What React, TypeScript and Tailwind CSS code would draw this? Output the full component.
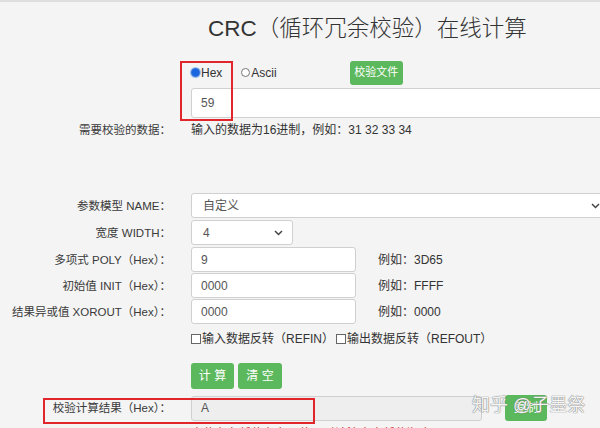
import React from "react";

const font = { fontFamily: '"Liberation Sans", "Noto Sans CJK SC", sans-serif' };

function Label({ children }: { children: React.ReactNode }) {
  return (
    <div className="flex w-[171px] shrink-0 justify-end whitespace-nowrap text-[11.5px] leading-[16px] text-[#3a3a3a]">
      <span>{children}</span>
    </div>
  );
}

function Chevron() {
  return (
    <svg width="9" height="6" viewBox="0 0 9 6" className="shrink-0">
      <path d="M1 1 L4.5 4.5 L8 1" fill="none" stroke="#444" strokeWidth="1.5" />
    </svg>
  );
}

function Row({ label, children, mt }: { label: string; children: React.ReactNode; mt: string }) {
  return (
    <div className={`flex items-center ${mt}`}>
      <Label>{label}</Label>
      <div className="ml-[20px] flex items-center">{children}</div>
    </div>
  );
}

function TextBox({ value, w }: { value: string; w: string }) {
  return (
    <div
      className={`${w} h-[25px] flex items-center rounded-[3px] border border-[#d0d0d0] bg-white pl-[9px] text-[12px] text-[#555]`}
    >
      {value}
    </div>
  );
}

function Check({ text }: { text: string }) {
  return (
    <div className="flex items-center whitespace-nowrap text-[12px] text-[#333]">
      <span className="mr-[1px] inline-block h-[10px] w-[10px] border border-[#666] bg-white" />
      {text}
    </div>
  );
}

export default function App() {
  return (
    <div
      className="relative h-[428px] w-[600px] overflow-hidden border-t-2 border-[#dedede] bg-[#f4f4f4]"
      style={font}
    >
      <h1 className="mt-[12px] pl-[208px] text-[22.5px] leading-[30px] font-light text-[#333] whitespace-nowrap">
        CRC（循环冗余校验）在线计算
      </h1>

      {/* data section */}
      <div className="mt-[16px] flex">
        <div className="flex flex-col justify-end">
          <Label>需要校验的数据：</Label>
        </div>
        <div className="ml-[20px] flex flex-col">
          <div className="flex h-[25px] items-center text-[12px] text-[#333]">
            <span className="inline-block h-[9px] w-[9px] rounded-full border border-[#2f6fd6] bg-[#1a66e0] shadow-[0_0_0_1px_#9fc0f0]" />
            <span className="ml-[1px]">Hex</span>
            <span className="ml-[19px] inline-block h-[9px] w-[9px] rounded-full border border-[#777] bg-white" />
            <span className="ml-[1px]">Ascii</span>
            <button className="ml-[73px] h-[24px] w-[53px] rounded-[3px] bg-[#5cb85c] text-[11px] text-white">
              校验文件
            </button>
          </div>
          <div className="mt-[3px] flex h-[30px] w-[420px] items-center rounded-[3px] border border-[#d0d0d0] bg-white pl-[9px] text-[12px] text-[#555]">
            59
          </div>
          <div className="mt-[4px] text-[12px] leading-[16px] text-[#333]">
            输入的数据为16进制，例如：31 32 33 34
          </div>
        </div>
      </div>

      {/* parameters */}
      <Row label="参数模型 NAME：" mt="mt-[55px]">
        <div className="flex h-[25px] w-[420px] items-center justify-between rounded-[3px] border border-[#d0d0d0] bg-white pl-[11px] pr-[10px] text-[12px] text-[#555]">
          <span>自定义</span>
          <Chevron />
        </div>
      </Row>
      <Row label="宽度 WIDTH：" mt="mt-[2px]">
        <div className="flex h-[25px] w-[102px] items-center justify-between rounded-[3px] border border-[#d0d0d0] bg-white pl-[11px] pr-[9px] text-[12px] text-[#555]">
          <span>4</span>
          <Chevron />
        </div>
      </Row>
      <Row label="多项式 POLY（Hex）：" mt="mt-[2px]">
        <TextBox value="9" w="w-[165px]" />
        <span className="ml-[22px] text-[12px] text-[#333]">例如：3D65</span>
      </Row>
      <Row label="初始值 INIT（Hex）：" mt="mt-[1px]">
        <TextBox value="0000" w="w-[165px]" />
        <span className="ml-[22px] text-[12px] text-[#333]">例如：FFFF</span>
      </Row>
      <Row label="结果异或值 XOROUT（Hex）：" mt="mt-[1px]">
        <TextBox value="0000" w="w-[165px]" />
        <span className="ml-[22px] text-[12px] text-[#333]">例如：0000</span>
      </Row>

      <div className="mt-[7px] flex h-[16px] items-center pl-[191px]">
        <div className="w-[145px]">
          <Check text="输入数据反转（REFIN）" />
        </div>
        <Check text="输出数据反转（REFOUT）" />
      </div>

      <div className="mt-[16px] flex gap-[4px] pl-[191px]">
        <button className="h-[26px] w-[43px] whitespace-pre rounded-[3px] bg-[#5cb85c] text-[12px] text-white">
          计 算
        </button>
        <button className="h-[26px] w-[44px] whitespace-pre rounded-[3px] bg-[#5cb85c] text-[12px] text-white">
          清 空
        </button>
      </div>

      <div className="mt-[6px] flex items-center">
        <Label>校验计算结果（Hex）：</Label>
        <div className="ml-[20px] flex h-[25px] w-[291px] items-center rounded-[3px] border border-[#d0d0d0] bg-[#eeeeee] pl-[9px] text-[12px] text-[#555]">
          A
        </div>
        <button className="ml-[23px] h-[26px] w-[42px] rounded-[3px] bg-[#5cb85c] text-[12px] text-white">
          复制
        </button>
      </div>

      <div className="mt-[5px] pl-[191px] text-[12px] leading-[16px] text-[#d0201a]">
        高位在左低位在右，使用时请注意高低位顺序！！！
      </div>

      {/* annotations */}
      <div className="absolute left-[180px] top-[59px] h-[60px] w-[53px] border-2 border-[#e0262b]" />
      <div className="absolute left-[43px] top-[396px] h-[26px] w-[272px] border-2 border-[#e0262b]" />

      {/* watermark */}
      <div className="absolute left-[472px] top-[391px] text-[18px] leading-[24px] text-[#f4f4f4] [text-shadow:0_0_1px_#777,0_0_1px_#777] whitespace-nowrap">
        知乎 @子墨祭
      </div>
    </div>
  );
}
